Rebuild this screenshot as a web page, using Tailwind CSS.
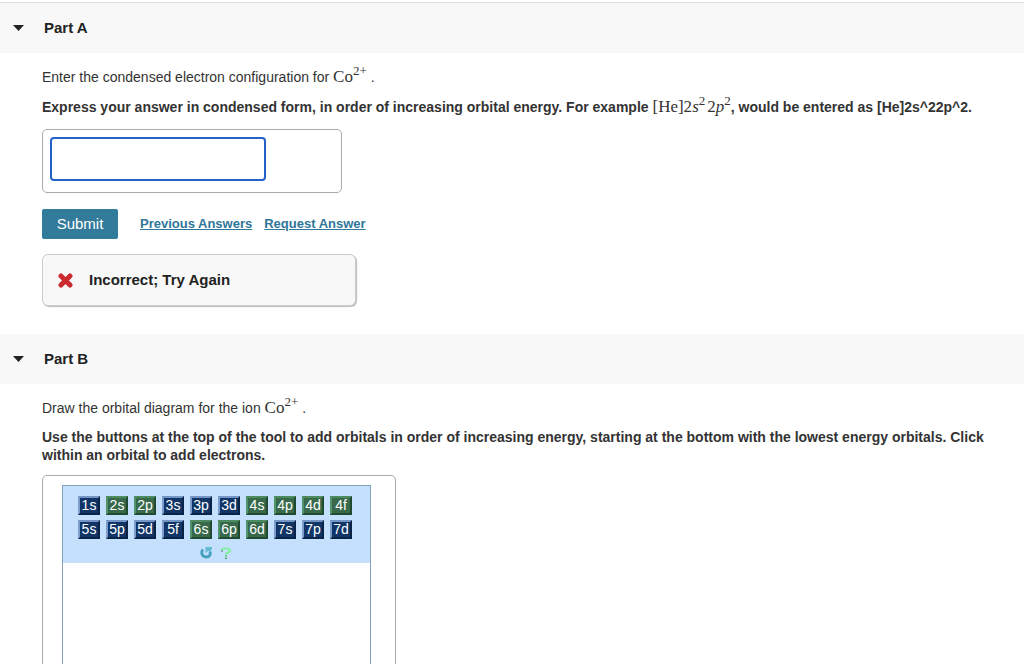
<!doctype html>
<html lang="en">
  <head>
    <meta charset="UTF-8" />
    <meta name="viewport" content="width=device-width, initial-scale=1.0" />
    <title>Electron Configuration</title>
    <script src="https://cdn.jsdelivr.net/npm/@tailwindcss/browser@4"></script>
  </head>

  <body class="h-screen overflow-hidden bg-white pt-[2px] font-['Liberation_Sans',Arial,sans-serif] text-sm text-[#333]">
    <section>
      <h2 class="border-t border-[#ddd] bg-[#f8f8f8]">
        <button class="flex h-[50px] w-full items-center gap-5 pl-[13px] text-[15px] font-bold text-[#222]" aria-expanded="true">
          <svg class="h-[6px] w-[11px]" viewBox="0 0 11 6" fill="#222"><path d="M0 0h11L5.5 6z" /></svg>
          Part A
        </button>
      </h2>
      <div class="pt-[14px] pr-4 pb-7 pl-[42px]">
        <p class="h-5 leading-5">
          Enter the condensed electron configuration for
          <span class="font-['Liberation_Serif',serif] text-[17px] leading-none">Co<sup class="-top-[7px] text-[13px]">2+</sup></span> .
        </p>
        <p class="mt-[10px] h-5 font-bold leading-5">
          <label for="answer">Express your answer in condensed form, in order of increasing orbital energy. For example
          <span class="font-['Liberation_Serif',serif] text-[17px] font-normal leading-none">[He]2<i>s</i><sup class="-top-[7px] mr-[2px] text-[13px]">2</sup>2<i>p</i><sup class="-top-[7px] text-[13px]">2</sup></span>, would be entered as [He]2s^22p^2.</label>
        </p>
        <div class="mt-3 h-16 w-[300px] rounded-[5px] border border-[#aaa] p-[7px]">
          <input id="answer" type="text" class="block h-11 w-[216px] rounded-[4px] border-2 border-[#2360c9] px-2 text-base outline-none" />
        </div>
        <div class="mt-4 flex items-center">
          <button class="h-[30px] w-[76px] rounded-[2px] bg-[#337b9b] text-[15px] text-white">Submit</button>
          <a href="#" class="ml-[22px] text-[13px] font-bold text-[#2f7698] underline">Previous Answers</a>
          <a href="#" class="ml-3 text-[13px] font-bold text-[#2f7698] underline">Request Answer</a>
        </div>
        <div class="mt-[15px] flex h-[52px] w-[314px] items-center gap-4 rounded-[6px] border border-[#ccc] bg-[#f8f8f8] pl-[15px] text-[15px] font-bold text-[#222] shadow-[1px_1px_1px_#bbb]">
          <svg class="h-[15px] w-[15px]" viewBox="0 0 15 15" stroke="#cb2a2e" stroke-width="5" stroke-linecap="round"><path d="M3 3l9 9M12 3l-9 9" /></svg>
          Incorrect; Try Again
        </div>
      </div>
    </section>

    <section>
      <h2 class="bg-[#f8f8f8]">
        <button class="flex h-[50px] w-full items-center gap-5 pl-[13px] text-[15px] font-bold text-[#222]" aria-expanded="true">
          <svg class="h-[6px] w-[11px]" viewBox="0 0 11 6" fill="#222"><path d="M0 0h11L5.5 6z" /></svg>
          Part B
        </button>
      </h2>
      <div class="pt-[14px] pr-4 pl-[42px]">
        <p class="h-5 leading-5">
          Draw the orbital diagram for the ion
          <span class="font-['Liberation_Serif',serif] text-[17px] leading-none">Co<sup class="-top-[7px] text-[13px]">2+</sup></span> .
        </p>
        <p class="mt-[10px] font-bold leading-[18px]">
          Use the buttons at the top of the tool to add orbitals in order of increasing energy, starting at the bottom with the lowest energy orbitals. Click within an orbital to add electrons.
        </p>
        <div class="mt-[11px] h-[420px] w-[354px] rounded-[5px] border border-[#aaa] pt-[9px] pl-[19px]">
          <div class="h-[380px] w-[309px] border border-[#84a0bf]">
            <div class="h-[77px] bg-[#c5e0fc] pt-[10px] pl-[15px]">
              <div id="orbitals" class="grid grid-cols-[repeat(10,22px)] gap-x-[6px] gap-y-[5px]"></div>
              <div class="mt-2 ml-[122px] flex gap-2">
                <button aria-label="Reset">
                  <svg class="h-3 w-3" viewBox="0 0 12 12" fill="none"><path d="M3 2.500C.8 5 1.500 10 6 10c4 0 5-3 3.800-5.500" stroke="#459fbd" stroke-width="2.800" /><path d="M5.500 0H12v2L10 4.500 8 4 5.500 6z" fill="#62b9d2" /></svg>
                </button>
                <button aria-label="Help">
                  <svg class="h-3 w-3" viewBox="0 0 12 12" fill="none"><path d="M1 4h2M5 9h2M5 11.500h2" stroke="#3c6e70" stroke-width="1" /><path d="M1.500 3Q2.500 1.500 6 1.500T10.200 3.500Q10 5 8 5.500T6 8.500M6 9.800v1.400" stroke="#83eda0" stroke-width="2.200" /></svg>
                </button>
              </div>
            </div>
          </div>
        </div>
      </div>
    </section>
  </body>

  <script>
    const orbitals = "1s 2s 2p 3s 3p 3d 4s 4p 4d 4f 5s 5p 5d 5f 6s 6p 6d 7s 7p 7d".split(" ")
    const green = ["2s", "2p", "4s", "4p", "4d", "4f", "6s", "6p", "6d"]
    const blueClass = "bg-[#103566] border-t-[#7596c4] border-l-[#7f9dcb] border-r-[#0a2448] border-b-[#0a2448]"
    const greenClass = "bg-[#37694a] border-t-[#4b8b5f] border-l-[#529467] border-r-[#204a2f] border-b-[#204a2f]"

    orbitals.forEach((name) => {
      const button = document.createElement("button")
      button.className = "h-[19px] w-[22px] border-2 text-sm leading-[15px] text-white " + (green.includes(name) ? greenClass : blueClass)
      button.textContent = name
      document.getElementById("orbitals").append(button)
    })
  </script>
</html>
